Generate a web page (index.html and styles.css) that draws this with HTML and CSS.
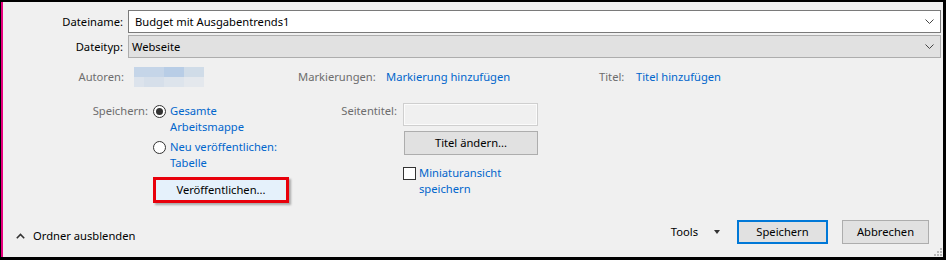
FILE: index.html
```html
<!DOCTYPE html>
<html lang="de">
<head>
  <meta charset="UTF-8">
  <title>Speichern unter</title>
  <link rel="stylesheet" href="styles.css">
</head>
<body>
  <div class="frame">
    <div class="dialog">

      <!-- Datei -->
      <div class="file-rows">
        <label class="file-label">Dateiname:</label>
        <div class="combo combo-edit">
          <span>Budget mit Ausgabentrends1</span>
          <svg class="chev" width="9" height="5" viewBox="0 0 9 5"><polyline points="0.5,0.5 4.5,4.5 8.5,0.5" fill="none" stroke="#444" stroke-width="1"/></svg>
        </div>
        <label class="file-label">Dateityp:</label>
        <div class="combo combo-type">
          <span>Webseite</span>
          <svg class="chev" width="9" height="5" viewBox="0 0 9 5"><polyline points="0.5,0.5 4.5,4.5 8.5,0.5" fill="none" stroke="#444" stroke-width="1"/></svg>
        </div>
      </div>

      <!-- Metadaten -->
      <div class="meta">
        <span class="meta-label authors-label">Autoren:</span>
        <div class="blur">
          <i style="background:#c5d5e8"></i><i style="background:#c5d5e8"></i><i style="background:#b8cde6"></i><i style="background:#d0dce8"></i>
          <i style="background:#dce3ec"></i><i style="background:#d6dfea"></i><i style="background:#dde4ec"></i><i style="background:#e4e8ed"></i>
        </div>
        <span class="meta-label tags-label">Markierungen:</span>
        <a class="link tags-link">Markierung hinzufügen</a>
        <span class="meta-label title-label">Titel:</span>
        <a class="link">Titel hinzufügen</a>
      </div>

      <!-- Optionen -->
      <div class="options">
        <div class="save-group">
          <span class="meta-label save-label">Speichern:</span>
          <div class="save-choices">
            <div class="radio-item">
              <span class="radio checked"></span>
              <a class="link">Gesamte<br>Arbeitsmappe</a>
            </div>
            <div class="radio-item">
              <span class="radio"></span>
              <a class="link">Neu veröffentlichen:<br>Tabelle</a>
            </div>
            <div class="publish-wrap">
              <button class="publish-btn">Veröffentlichen...</button>
            </div>
          </div>
        </div>

        <div class="page-group">
          <span class="meta-label page-label">Seitentitel:</span>
          <div class="page-controls">
            <div class="page-input"></div>
            <button class="btn title-btn">Titel ändern...</button>
            <div class="check-item">
              <span class="checkbox"></span>
              <a class="link">Miniaturansicht<br>speichern</a>
            </div>
          </div>
        </div>
      </div>

      <!-- Fußzeile -->
      <div class="footer">
        <div class="folders">
          <svg width="9" height="6" viewBox="0 0 9 6"><polyline points="0.8,5.2 4.5,1.5 8.2,5.2" fill="none" stroke="#333" stroke-width="1.6"/></svg>
          <span>Ordner ausblenden</span>
        </div>
        <div class="actions">
          <span class="tools">Tools</span>
          <span class="tools-arrow"></span>
          <button class="btn btn-default">Speichern</button>
          <button class="btn btn-cancel">Abbrechen</button>
        </div>
      </div>

      <div class="grip">
        <i style="left:6px;top:0"></i>
        <i style="left:3px;top:3px"></i><i style="left:6px;top:3px"></i>
        <i style="left:0;top:6px"></i><i style="left:3px;top:6px"></i><i style="left:6px;top:6px"></i>
      </div>
    </div>
  </div>
</body>
</html>
```

FILE: styles.css
```css
* {
  margin: 0;
  padding: 0;
  box-sizing: border-box;
}

body {
  font-family: "Segoe UI", "Noto Sans", sans-serif;
  font-size: 11.2px;
  line-height: 16px;
  color: #000;
  background: #000;
}

/* Rahmen */
.frame {
  width: 946px;
  height: 260px;
  border-top: 2px solid #000;
  border-right: 3px solid #000;
  border-bottom: 3px solid #000;
  border-left: 1px solid #000;
}

.dialog {
  position: relative;
  height: 100%;
  background: #f0f0f0;
  border-left: 2px solid #e6007e;
  display: flex;
  flex-direction: column;
  padding: 8px 2px 0 0;
}

/* Dateiname / Dateityp */
.file-rows {
  display: grid;
  grid-template-columns: 120px 1fr;
  column-gap: 5px;
  row-gap: 2px;
}

.file-label {
  text-align: right;
  align-self: center;
}

.combo {
  height: 23px;
  display: flex;
  align-items: center;
  justify-content: space-between;
  padding: 0 6px 0 6px;
  border: 1px solid #7a7a7a;
  background: #fff;
}

.combo-type {
  background: #e1e1e1;
  border-color: #adadad;
  padding-left: 3px;
}

/* Metadaten */
.meta {
  display: flex;
  align-items: center;
  height: 20px;
  margin-top: 9px;
}

.meta-label {
  color: #6d6d6d;
}

.authors-label {
  width: 121px;
  text-align: right;
  margin-right: 10px;
}

.blur {
  width: 70px;
  height: 20px;
  display: grid;
  grid-template-columns: 10px 20px 20px 20px;
  grid-template-rows: 10px 10px;
}

.blur i {
  display: block;
}

.tags-label {
  margin-left: 94px;
  width: 88px;
}

.tags-link {
  width: 213px;
}

.title-label {
  width: 37px;
}

.link {
  color: #0066cc;
  text-decoration: none;
}

/* Optionen */
.options {
  display: flex;
  margin-top: 16px;
}

.save-group {
  display: flex;
}

.save-label {
  width: 145px;
  text-align: right;
  margin-right: 5px;
}

.save-choices {
  width: 136px;
  display: flex;
  flex-direction: column;
  gap: 4px;
}

.radio-item {
  display: flex;
  align-items: flex-start;
  gap: 4px;
}

.radio {
  width: 13px;
  height: 13px;
  margin-top: 2px;
  border: 1px solid #333;
  border-radius: 50%;
  background: #fff;
  flex-shrink: 0;
  display: flex;
  align-items: center;
  justify-content: center;
}

.radio.checked::after {
  content: "";
  width: 7px;
  height: 7px;
  border-radius: 50%;
  background: #333;
}

.publish-wrap {
  margin-top: 2px;
}

.publish-btn {
  width: 136px;
  height: 26px;
  font: inherit;
  color: #000;
  background: #e5f1fb;
  border: 3px solid #e8000b;
  box-shadow: 2px 2px 2px rgba(0, 0, 0, 0.3);
}

.page-group {
  display: flex;
  margin-left: 11px;
}

.page-label {
  width: 97px;
  text-align: right;
  margin-right: 6px;
}

.page-controls {
  width: 135px;
  display: flex;
  flex-direction: column;
}

.page-input {
  height: 23px;
  border: 1px solid #cfcfcf;
  box-shadow: inset 0 0 0 1px #fbfbfb;
  background: #f0f0f0;
}

.btn {
  font: inherit;
  color: #000;
  background: #e1e1e1;
  border: 1px solid #adadad;
  height: 24px;
}

.title-btn {
  margin: 5px 0 0 1px;
  width: 134px;
}

.check-item {
  display: flex;
  align-items: flex-start;
  gap: 3px;
  margin-top: 10px;
}

.checkbox {
  width: 13px;
  height: 13px;
  margin-top: 2px;
  border: 1px solid #333;
  background: #fff;
  flex-shrink: 0;
}

/* Fußzeile */
.footer {
  margin-top: auto;
  padding: 0 12px 13px 13px;
  display: flex;
  justify-content: space-between;
  align-items: flex-end;
}

.folders {
  display: flex;
  align-items: center;
  gap: 8px;
}

.actions {
  display: flex;
  align-items: center;
}

.tools {
  margin-right: 16px;
}

.tools-arrow {
  width: 0;
  height: 0;
  border-left: 3.5px solid transparent;
  border-right: 3.5px solid transparent;
  border-top: 4px solid #333;
  margin-right: 17px;
}

.btn-default {
  width: 91px;
  border: 2px solid #0078d7;
  margin-right: 14px;
}

.btn-cancel {
  width: 87px;
}

/* Größengriff */
.grip {
  position: absolute;
  right: 1px;
  bottom: 1px;
  width: 8px;
  height: 8px;
}

.grip i {
  position: absolute;
  width: 2px;
  height: 2px;
  background: #b8b8b8;
}
```
